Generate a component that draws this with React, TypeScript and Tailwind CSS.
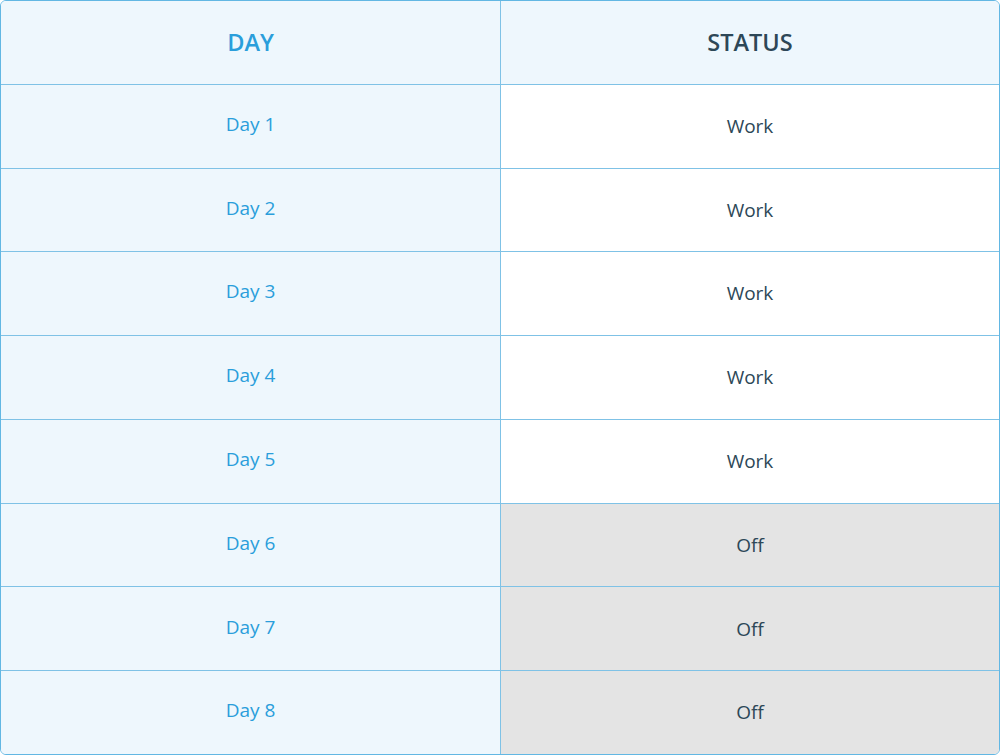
import React from 'react';

type Row = { day: string; status: 'Work' | 'Off' };

const rows: Row[] = [
  { day: 'Day 1', status: 'Work' },
  { day: 'Day 2', status: 'Work' },
  { day: 'Day 3', status: 'Work' },
  { day: 'Day 4', status: 'Work' },
  { day: 'Day 5', status: 'Work' },
  { day: 'Day 6', status: 'Off' },
  { day: 'Day 7', status: 'Off' },
  { day: 'Day 8', status: 'Off' },
];

export default function App() {
  return (
    <div className="w-[1000px] h-[755px] bg-white font-['Open_Sans',sans-serif]">
      <div className="flex h-full flex-col overflow-hidden rounded-md border border-[#62b7e3]">
        {/* header */}
        <div className="flex flex-1 border-b border-[#7fc2e6] bg-[#eef7fd]">
          <div className="flex w-[500px] items-center justify-center border-r border-[#7fc2e6] text-[23.5px] font-semibold text-[#2a9edb]">
            DAY
          </div>
          <div className="flex flex-1 items-center justify-center text-[23.5px] font-semibold text-[#2d4757]">
            STATUS
          </div>
        </div>

        {rows.map((r, i) => (
          <div
            key={r.day}
            className={`flex flex-1 ${i < rows.length - 1 ? 'border-b border-[#7fc2e6]' : ''}`}
          >
            <div className="flex w-[500px] items-center justify-center border-r border-[#7fc2e6] bg-[#eef7fd] pb-1 text-[19px] text-[#2a9edb]">
              {r.day}
            </div>
            <div
              className={`flex flex-1 items-center justify-center text-[19px] text-[#2d4757] ${
                r.status === 'Off' ? 'bg-[#e4e4e4]' : 'bg-white'
              }`}
            >
              {r.status}
            </div>
          </div>
        ))}
      </div>
    </div>
  );
}
